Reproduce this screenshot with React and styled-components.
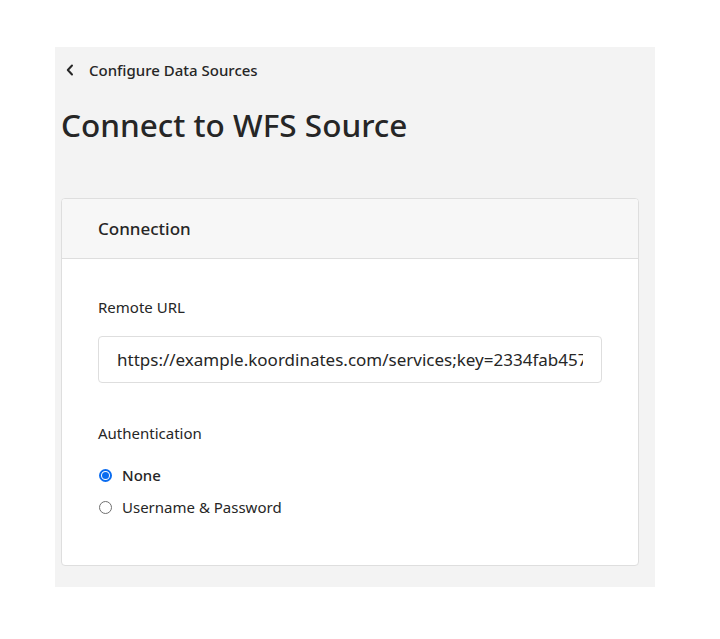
import React, { useState } from "react";
import styled, { createGlobalStyle } from "styled-components";

const GlobalStyle = createGlobalStyle`
  body {
    margin: 0;
    background: #ffffff;
    font-family: "Noto Sans", "Open Sans", Arial, sans-serif;
    color: #262626;
  }
`;

// Gray page area
const Page = styled.div`
  width: 600px;
  height: 540px;
  margin: 47px 0 0 55px;
  background: #f3f3f3;
  box-sizing: border-box;
  padding: 12px 16px 21px 6px;
  display: flex;
  flex-direction: column;
`;

const BackLink = styled.a`
  display: flex;
  align-items: center;
  gap: 15px;
  padding-left: 5px;
  height: 22px;
  font-size: 15px;
  font-weight: 500;
  color: #262626;
  text-decoration: none;
  cursor: pointer;
`;

const Title = styled.h1`
  margin: 24px 0 0;
  font-size: 31.5px;
  font-weight: 500;
  line-height: 40px;
  color: #262626;
`;

// Card
const Card = styled.section`
  margin-top: 53px;
  flex: 1;
  background: #ffffff;
  border: 1px solid #dedede;
  border-radius: 4px;
  display: flex;
  flex-direction: column;
  overflow: hidden;
`;

const CardHeader = styled.div`
  height: 59px;
  background: #f7f7f7;
  border-bottom: 1px solid #dedede;
  display: flex;
  align-items: center;
  padding: 0 36px;
  font-size: 17px;
  font-weight: 500;
`;

const CardBody = styled.div`
  padding: 38px 36px 0;
  display: flex;
  flex-direction: column;
`;

const Label = styled.div`
  font-size: 15px;
  line-height: 20px;
  margin-bottom: ${({ gap }) => gap}px;
`;

const TextInput = styled.input`
  box-sizing: border-box;
  width: 100%;
  height: 47px;
  border: 1px solid #dedede;
  border-radius: 4px;
  padding: 0 18px;
  font-family: inherit;
  font-size: 17px;
  color: #262626;
  background: #ffffff;
  outline: none;
`;

const Fieldset = styled.div`
  margin-top: 40px;
  display: flex;
  flex-direction: column;
`;

const RadioRow = styled.label`
  display: flex;
  align-items: center;
  gap: 10px;
  height: 32px;
  font-size: 15px;
  font-weight: ${({ checked }) => (checked ? 500 : 400)};
  cursor: pointer;
`;

const RadioDot = styled.span`
  width: 13px;
  height: 13px;
  box-sizing: border-box;
  border-radius: 50%;
  border: ${({ checked }) => (checked ? "2px solid #0a6cf0" : "1px solid #6f6f6f")};
  display: flex;
  align-items: center;
  justify-content: center;
  margin-left: 1px;

  &::after {
    content: "";
    width: 7px;
    height: 7px;
    border-radius: 50%;
    background: #0a6cf0;
    display: ${({ checked }) => (checked ? "block" : "none")};
  }
`;

const Chevron = () => (
  <svg width="8" height="12" viewBox="0 0 8 12" fill="none">
    <path d="M6 1.5L1.8 6L6 10.5" stroke="#262626" strokeWidth="2" strokeLinecap="round" strokeLinejoin="round" />
  </svg>
);

const options = ["None", "Username & Password"];

export default function App() {
  const [auth, setAuth] = useState("None");

  return (
    <>
      <GlobalStyle />
      <Page>
        <BackLink>
          <Chevron />
          Configure Data Sources
        </BackLink>
        <Title>Connect to WFS Source</Title>
        <Card>
          <CardHeader>Connection</CardHeader>
          <CardBody>
            <Label gap={19}>Remote URL</Label>
            <TextInput
              readOnly
              value="https://example.koordinates.com/services;key=2334fab457a9c0d1"
            />
            <Fieldset>
              <Label gap={16}>Authentication</Label>
              {options.map((opt) => (
                <RadioRow key={opt} checked={auth === opt} onClick={() => setAuth(opt)}>
                  <RadioDot checked={auth === opt} />
                  {opt}
                </RadioRow>
              ))}
            </Fieldset>
          </CardBody>
        </Card>
      </Page>
    </>
  );
}
